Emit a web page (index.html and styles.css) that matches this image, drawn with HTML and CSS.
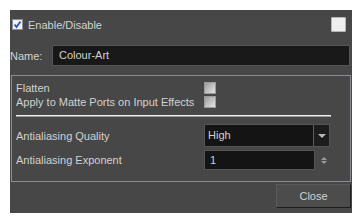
FILE: index.html
```html
<!DOCTYPE html>
<html lang="en">
<head>
    <meta charset="UTF-8">
    <title>Colour-Art</title>
    <link rel="stylesheet" href="styles.css">
</head>
<body>
    <div class="dialog">
        <div class="top-row">
            <label class="enable">
                <svg class="check-main" width="11" height="11" viewBox="0 0 11 11">
                    <rect x="0.5" y="0.5" width="10" height="10" fill="#f2f2f2" stroke="#8c8c8c"/>
                    <path d="M2.5 5.5 L4.5 8 L8.5 2.5" fill="none" stroke="#2a4fc4" stroke-width="1.8"/>
                </svg>
                <span>Enable/Disable</span>
            </label>
            <span class="swatch"></span>
        </div>

        <div class="name-row">
            <span class="name-label">Name:</span>
            <div class="name-field">Colour-Art</div>
        </div>

        <div class="group">
            <div class="option-row">
                <span>Flatten</span>
                <span class="box"></span>
            </div>
            <div class="option-row">
                <span>Apply to Matte Ports on Input Effects</span>
                <span class="box"></span>
            </div>
            <div class="separator"></div>
            <div class="field-row quality">
                <span>Antialiasing Quality</span>
                <div class="combo">
                    <span class="combo-value">High</span>
                    <span class="combo-arrow"></span>
                </div>
            </div>
            <div class="field-row">
                <span>Antialiasing Exponent</span>
                <div class="spin">
                    <div class="spin-field">1</div>
                    <div class="spin-arrows">
                        <span class="up"></span>
                        <span class="down"></span>
                    </div>
                </div>
            </div>
        </div>

        <div class="buttons">
            <button class="close-btn">Close</button>
        </div>
    </div>
</body>
</html>
```

FILE: styles.css
```css
body {
    margin: 0;
    background: #fff;
    font-family: "Liberation Sans", Arial, sans-serif;
    font-size: 11px;
    color: #d2d2d2;
}
.dialog {
    margin: 10px;
    width: 342px;
    height: 203px;
    background-color: #474747;
    display: flex;
    flex-direction: column;
}
.top-row {
    height: 29px;
    display: flex;
    align-items: center;
    justify-content: space-between;
    padding: 0 6px 0 2px;
}
.enable {
    display: flex;
    align-items: center;
    gap: 5px;
}
.check-main {
    display: block;
}
.swatch {
    width: 13px;
    height: 13px;
    background-color: #eeeeee;
    border: 1px solid #b4b4b4;
    border-radius: 1px;
}
.name-row {
    margin-top: 6px;
    display: flex;
    align-items: center;
    height: 21px;
}
.name-label {
    width: 42px;
}
.name-field {
    width: 290px;
    height: 19px;
    line-height: 19px;
    padding-left: 6px;
    background-color: #181818;
    border: 1px solid #555;
}
.group {
    margin: 9px 0 0 1px;
    width: 334px;
    height: 100px;
    border: 1px solid #8a8c94;
    padding: 5px 0 0 4px;
}
.option-row {
    display: grid;
    grid-template-columns: 188px 12px;
    align-items: center;
    height: 14px;
}
.box {
    width: 10px;
    height: 10px;
    border: 1px solid #9a9a9a;
    background: linear-gradient(135deg, #9c9c9c, #e4e4e4);
}
.separator {
    margin-top: 6px;
    width: 315px;
    height: 1px;
    background-color: #f2f2f2;
    border-bottom: 1px solid #9a9a9a;
}
.field-row {
    display: grid;
    grid-template-columns: 188px auto;
    align-items: center;
    margin-top: 3px;
}
.field-row.quality {
    margin-top: 7px;
}
.combo {
    width: 126px;
    height: 23px;
    display: flex;
    background-color: #141414;
    box-sizing: border-box;
    border: 1px solid #555;
}
.combo-value {
    flex: 1;
    line-height: 21px;
    padding-left: 3px;
}
.combo-arrow {
    width: 15px;
    border-left: 1px solid #5e5e5e;
    background-color: #1c1c1c;
    position: relative;
}
.combo-arrow::after {
    content: "";
    position: absolute;
    left: 4px;
    top: 9px;
    border-left: 4px solid transparent;
    border-right: 4px solid transparent;
    border-top: 4px solid #b8b8b8;
}
.spin {
    display: flex;
    align-items: center;
}
.spin-field {
    width: 104px;
    height: 18px;
    line-height: 18px;
    padding-left: 5px;
    background-color: #141414;
    border: 1px solid #555;
}
.spin-arrows {
    margin-left: 6px;
    display: flex;
    flex-direction: column;
    gap: 1px;
}
.spin-arrows span {
    width: 0;
    height: 0;
    border-left: 3px solid transparent;
    border-right: 3px solid transparent;
}
.spin-arrows .up {
    border-bottom: 3px solid #9a9a9a;
}
.spin-arrows .down {
    border-top: 3px solid #9a9a9a;
}
.buttons {
    display: flex;
    justify-content: flex-end;
    margin-top: 2px;
    padding-right: 1px;
}
.close-btn {
    width: 75px;
    height: 24px;
    background-color: #4c4c4c;
    border: 1px solid #5a5a5a;
    border-right-color: #1e1e1e;
    border-bottom-color: #1e1e1e;
    color: #d2d2d2;
    font-family: "Liberation Sans", Arial, sans-serif;
    font-size: 11px;
    padding: 0;
}
```
